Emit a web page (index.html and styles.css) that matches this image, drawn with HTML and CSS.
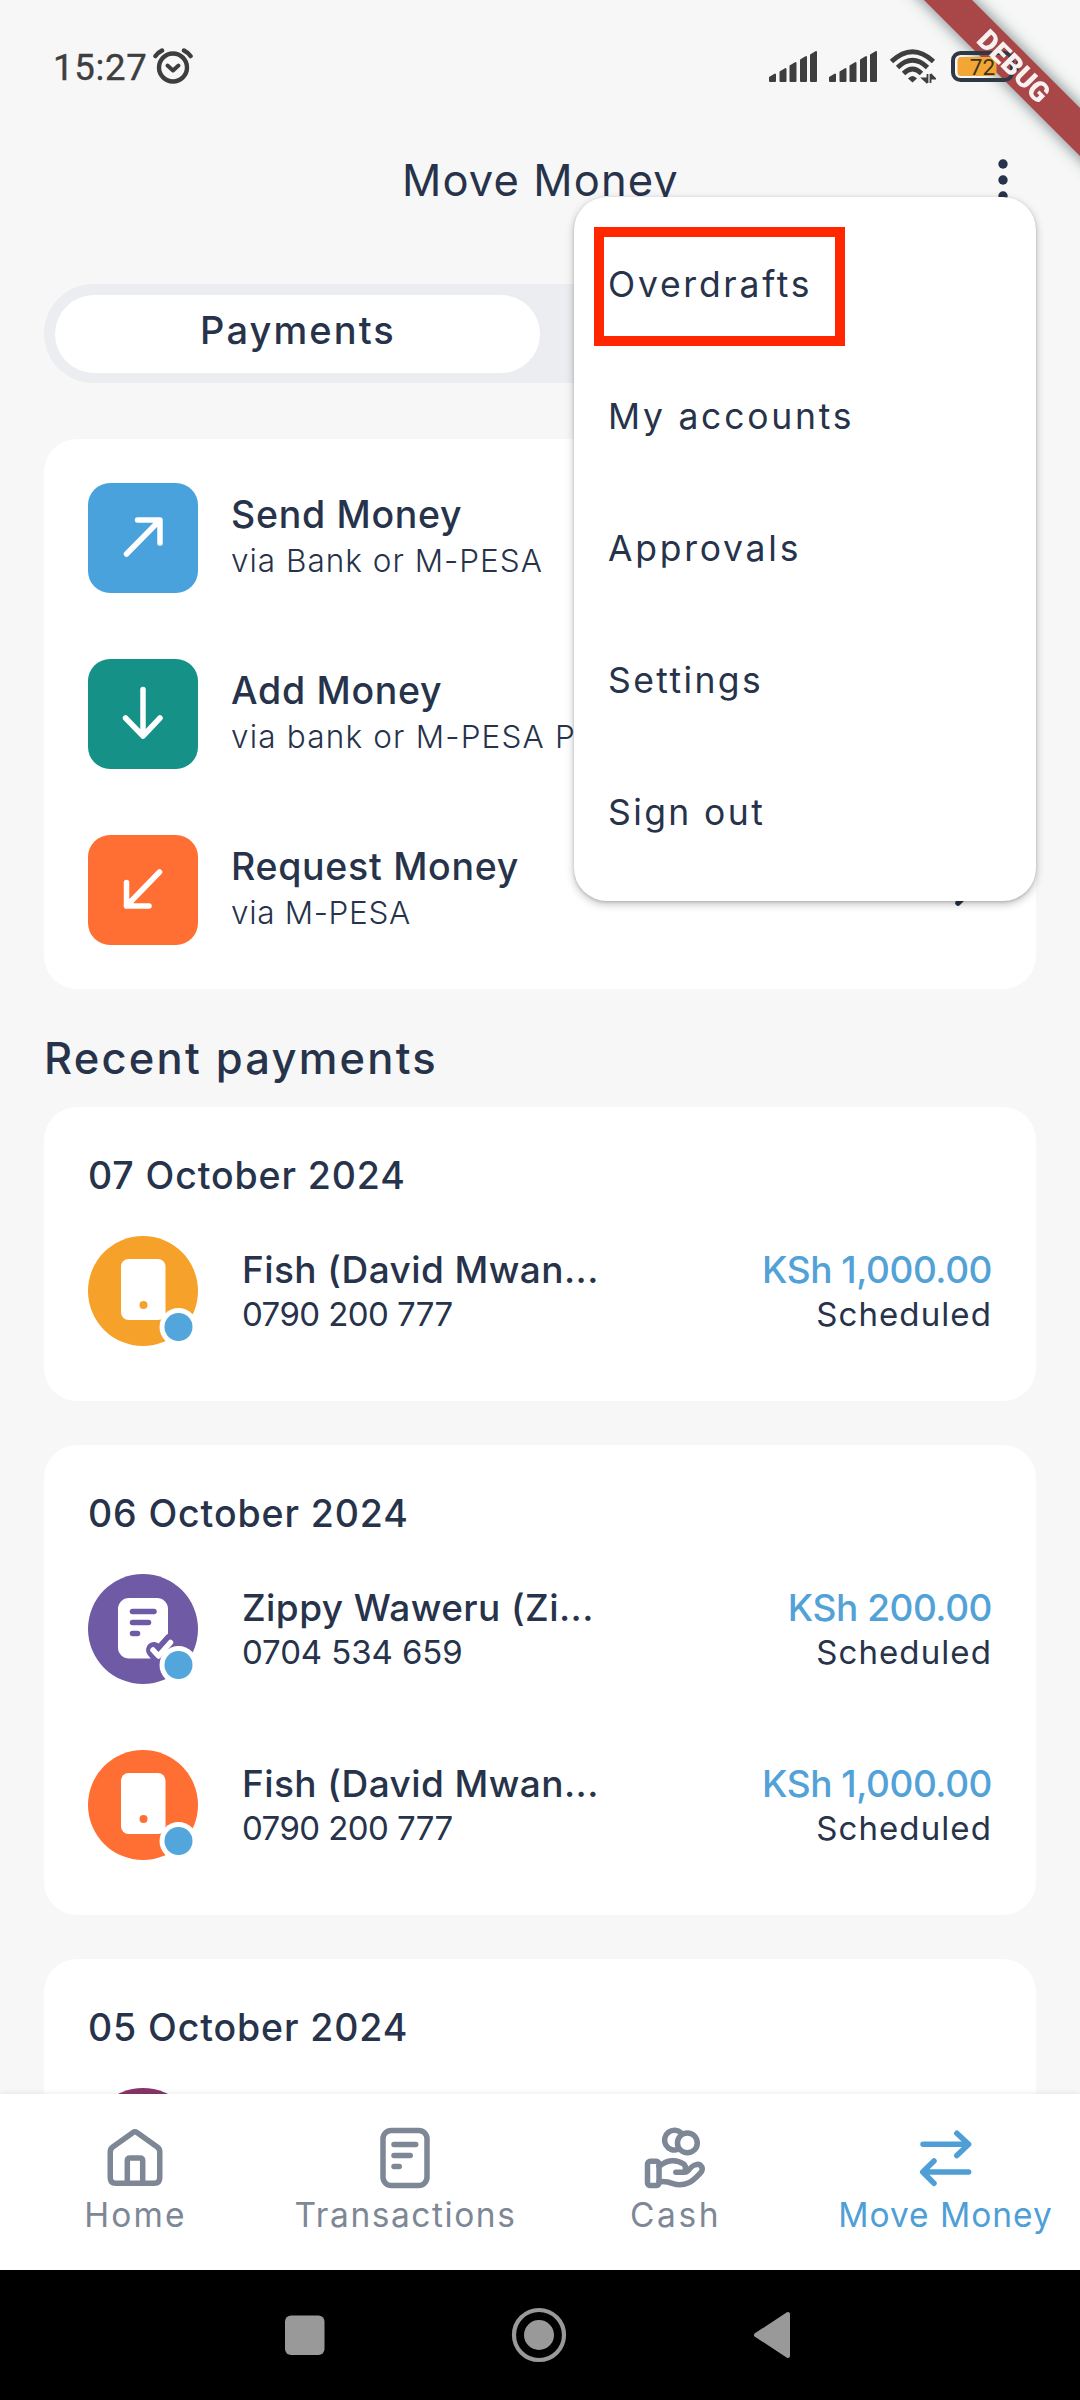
FILE: index.html
```html
<!DOCTYPE html>
<html lang="en">
<head>
<meta charset="utf-8">
<title>Move Money</title>
<link rel="stylesheet" href="styles.css">
</head>
<body>
<svg class="ribbon" viewBox="0 0 200 200" aria-hidden="true">
  <rect class="ribbon-band" x="-200" y="-17" width="400" height="34" transform="translate(134 66) rotate(45)"/>
</svg>
<svg class="ribbon ribbon-label" viewBox="0 0 200 200">
  <text class="ribbon-text" x="0" y="10" text-anchor="middle" transform="translate(134 66) rotate(45)">DEBUG</text>
</svg>

<div class="status">
  <span class="clock">15:27</span>
  <svg class="alarm" viewBox="0 0 40 38" fill="none" stroke="#3e3e3e" stroke-linecap="round">
    <circle cx="20" cy="20.5" r="14" stroke-width="4.4"/>
    <path d="M14.500 18.500l5.500 5 5.500-5" stroke-width="4" stroke-linejoin="round"/>
    <path d="M2.500 9Q5 5.500 9 3.500M37.500 9Q35 5.500 31 3.500" stroke-width="4.500"/>
  </svg>
  <div class="status-right">
    <svg class="signal" viewBox="0 0 48 31" fill="#3e3e3e" stroke="#3e3e3e" stroke-width="2" stroke-linejoin="round">
      <path d="M1 26.500l5-3V30H1zM11.500 21l5-3V30h-5zM21.500 15l5-3V30h-5zM32 9l5-3V30h-5zM42 4l5-3V30h-5z"/>
    </svg>
    <svg class="signal" viewBox="0 0 48 31" fill="#3e3e3e" stroke="#3e3e3e" stroke-width="2" stroke-linejoin="round">
      <path d="M1 26.500l5-3V30H1zM11.500 21l5-3V30h-5zM21.500 15l5-3V30h-5zM32 9l5-3V30h-5zM42 4l5-3V30h-5z"/>
    </svg>
    <svg class="wifi" viewBox="0 0 46 35" fill="none" stroke="#3e3e3e" stroke-width="4.800">
      <path d="M1.500 12.500Q22.500-7 43.500 12.500M7.500 18.500Q22.500 4 37.500 18.500M13.500 24.500Q22.500 15.500 31.500 24.500"/>
      <path d="M18 29.500Q22.500 24.500 27 29.500L22.500 33.500z" fill="#3e3e3e" stroke="none"/>
      <path d="M37.500 25V34M37.500 34L32.500 29.500H37.500M40.500 34V25M40.500 25L45 29.500H40.500" fill="#3e3e3e" stroke-width="1.800"/>
    </svg>
    <svg class="battery" viewBox="0 0 69 31">
      <rect x="2" y="2" width="59" height="27" rx="7.500" fill="none" stroke="#2f3845" stroke-width="4"/>
      <rect x="6.500" y="6" width="39" height="19" rx="3.500" fill="#f2a735"/>
      <path d="M65 10.500q3 0 3 5t-3 5z" fill="#2f3845"/>
      <text x="31.500" y="24" text-anchor="middle" class="battery-text">72</text>
    </svg>
  </div>
</div>

<header class="appbar">
  <h1 class="title">Move Money</h1>
  <svg class="more" viewBox="0 0 12 44" fill="#27334a"><circle cx="6" cy="6" r="4.700"/><circle cx="6" cy="22" r="4.700"/><circle cx="6" cy="38" r="4.700"/></svg>
</header>

<div class="menu">
  <div class="menu-item"><span class="highlight"></span>Overdrafts</div>
  <div class="menu-item">My accounts</div>
  <div class="menu-item">Approvals</div>
  <div class="menu-item tighter">Settings</div>
  <div class="menu-item tighter">Sign out</div>
</div>

<main class="content">
  <div class="segmented"><div class="segment">Payments</div></div>

  <section class="card actions">
    <div class="action">
      <svg class="tile send" viewBox="0 0 110 110"><path d="M38.500 71L71.500 37.500M49.500 37H72V60"/></svg>
      <div class="action-text"><div class="action-name">Send Money</div><div class="action-sub">via Bank or M-PESA</div></div>
    </div>
    <div class="action">
      <svg class="tile add" viewBox="0 0 110 110"><path d="M55 30.500V77M37.500 59L55 77 72 59"/></svg>
      <div class="action-text"><div class="action-name">Add Money</div><div class="action-sub wide">via bank or M-PESA P</div></div>
    </div>
    <div class="action">
      <svg class="tile request" viewBox="0 0 110 110"><path d="M71.500 37L38.500 71M38.500 47.500V71H61"/></svg>
      <div class="action-text"><div class="action-name">Request Money</div><div class="action-sub narrow">via M-PESA</div></div>
      <svg class="chevron" viewBox="0 0 22 34" fill="none" stroke="#27334a" stroke-width="5.500" stroke-linecap="round" stroke-linejoin="round"><path d="M4 4l13 13L4 30"/></svg>
    </div>
  </section>

  <h2 class="heading">Recent payments</h2>

  <section class="card day">
    <div class="date">07 October 2024</div>
    <div class="payments">
      <div class="payment">
        <svg class="avatar amber" viewBox="0 0 110 110"><circle class="disc" cx="55" cy="55" r="55"/><rect x="33" y="23" width="44.500" height="61" rx="7.500" fill="#fff"/><circle class="disc" cx="55.500" cy="69" r="4"/><circle cx="90.500" cy="91" r="19" fill="#fff"/><circle cx="90.500" cy="91" r="14" fill="#52a6dc"/></svg>
        <div class="who"><div class="name">Fish (David Mwan...</div><div class="phone tight">0790 200 777</div></div>
        <div class="sum"><div class="amount">KSh 1,000.00</div><div class="state">Scheduled</div></div>
      </div>
    </div>
  </section>

  <section class="card day">
    <div class="date">06 October 2024</div>
    <div class="payments">
      <div class="payment">
        <svg class="avatar purple" viewBox="0 0 110 110"><circle class="disc" cx="55" cy="55" r="55"/><rect x="30" y="24" width="50" height="60.500" rx="11" fill="#fff"/><g fill="none" stroke-linecap="round" stroke-linejoin="round"><path class="line" stroke-width="5.500" d="M44.500 37.500H66M44.500 48.500H60.500M44.500 59.500H49.500"/><path class="line" stroke-width="16" d="M66 76L70.500 81.500 84 66.500"/><path stroke="#fff" stroke-width="5.500" d="M65 76L70.500 82 82.500 68.500"/></g><circle cx="90.500" cy="91" r="19" fill="#fff"/><circle cx="90.500" cy="91" r="14" fill="#52a6dc"/></svg>
        <div class="who"><div class="name">Zippy Waweru (Zi...</div><div class="phone">0704 534 659</div></div>
        <div class="sum"><div class="amount">KSh 200.00</div><div class="state">Scheduled</div></div>
      </div>
      <div class="payment">
        <svg class="avatar orange" viewBox="0 0 110 110"><circle class="disc" cx="55" cy="55" r="55"/><rect x="33" y="23" width="44.500" height="61" rx="7.500" fill="#fff"/><circle class="disc" cx="55.500" cy="69" r="4"/><circle cx="90.500" cy="91" r="19" fill="#fff"/><circle cx="90.500" cy="91" r="14" fill="#52a6dc"/></svg>
        <div class="who"><div class="name">Fish (David Mwan...</div><div class="phone tight">0790 200 777</div></div>
        <div class="sum"><div class="amount">KSh 1,000.00</div><div class="state">Scheduled</div></div>
      </div>
    </div>
  </section>

  <section class="card day">
    <div class="date">05 October 2024</div>
    <div class="payments">
      <div class="payment"><svg class="avatar plum" viewBox="0 0 110 110"><circle class="disc" cx="55" cy="55" r="55"/></svg></div>
    </div>
  </section>
</main>

<nav class="tabs">
  <div class="tab">
    <svg class="tab-icon" viewBox="0 0 24 24"><path d="M3 19.200V9.700Q3 8.700 3.900 8L11.300 2.700Q12 2.200 12.700 2.700L20.100 8Q21 8.700 21 9.700V19.200Q21 21.200 19 21.200H5Q3 21.200 3 19.200z"/><path d="M9.200 21V13Q9.200 12 10.200 12H13.800Q14.800 12 14.800 13V21"/></svg>
    <span class="tab-label home">Home</span>
  </div>
  <div class="tab">
    <svg class="tab-icon" viewBox="0 0 24 24"><rect x="4" y="2" width="16" height="20" rx="3"/><path d="M8 7.100H15.900M8 11.100H13.900M8 15.100H9.900"/></svg>
    <span class="tab-label">Transactions</span>
  </div>
  <div class="tab">
    <svg class="tab-icon" viewBox="0 0 24 24"><path d="M14.300 2.900A3.600 3.600 0 1 0 13 8.900"/><circle cx="16.500" cy="6.500" r="3.600"/><rect x="2" y="13.200" width="4.200" height="8.800" rx="1"/><path d="M6.200 15Q8.500 13.200 10.800 13T15.300 14.300Q16.200 15.400 15.600 16.800M12.300 17.200H15.400Q16.300 17.200 17 16.300Q18.500 14.600 19.500 14.500Q20.800 13.900 21.700 15.100Q22.300 16.400 21.200 17.500Q18.600 20.300 17 21Q14 22.300 11.300 21.300Q9 20.400 6.200 20.600"/></svg>
    <span class="tab-label cash">Cash</span>
  </div>
  <div class="tab active">
    <svg class="tab-icon" viewBox="0 0 24 24"><path d="M4 7H20.400M16.300 3L20.600 7 16.300 11.100M20.600 17.100H4M8 13.100L3.900 17.100 8 21.200"/></svg>
    <span class="tab-label move">Move Money</span>
  </div>
</nav>

<div class="system">
  <svg class="sys-icon" viewBox="0 0 56 56"><rect x="8" y="8.500" width="39.500" height="39.500" rx="6"/></svg>
  <svg class="sys-icon" viewBox="0 0 56 56"><circle cx="28" cy="28" r="25" fill="none" stroke="#999" stroke-width="4.200"/><circle cx="28" cy="28" r="15"/></svg>
  <svg class="sys-icon" viewBox="0 0 56 56"><path d="M11 28L43 7V49z" stroke="#999" stroke-width="4" stroke-linejoin="round"/></svg>
</div>
</body>
</html>
```
FILE: styles.css
```css
* { box-sizing: border-box; }

body {
  position: relative;
  display: flex;
  flex-direction: column;
  width: 1080px;
  height: 2400px;
  margin: 0;
  overflow: hidden;
  background: #f7f7f7;
  color: #27334a;
  font-family: Inter, "Open Sans", sans-serif;
}

svg { display: block; flex: none; }

/* status bar */
.status {
  display: flex;
  align-items: flex-start;
  height: 120px;
  padding: 48px 64px 0 53px;
}
.clock {
  margin-top: -2px;
  width: 100px;
  color: #3e3e3e;
  font: 400 36.500px/44px Roboto, sans-serif;
  letter-spacing: 0.700px;
  -webkit-text-stroke: 0.400px #3e3e3e;
}
.alarm { width: 40px; height: 38px; margin-top: -1px; }
.status-right {
  display: flex;
  position: relative;
  z-index: 3;
  margin-left: auto;
  margin-right: -4px;
}
.signal { width: 48px; height: 31px; margin: 3px 12px 0 0; }
.wifi { width: 46px; height: 35px; margin: 1px 15px 0 1px; }
.battery { width: 69px; height: 31px; margin-top: 3px; }
.battery-text { font: 400 22.500px Roboto, sans-serif; fill: #3b3322; }

.ribbon {
  position: absolute;
  top: 0;
  right: 0;
  z-index: 2;
  width: 200px;
  height: 200px;
}
.ribbon-label { z-index: 5; opacity: 0.930; }
.ribbon-band { fill: #a84648; filter: drop-shadow(0 0 8px rgba(0, 20, 20, 0.550)); }
.ribbon-text { fill: #fff; font: 900 28px Roboto, sans-serif; }

/* app bar */
.appbar {
  display: flex;
  position: relative;
  align-items: center;
  justify-content: center;
  height: 119px;
}
.title {
  margin: 0 0 0 1px;
  font-size: 43.500px;
  font-weight: 400;
  letter-spacing: 1.100px;
  line-height: 60px;
}
.more { position: absolute; top: 38px; right: 71px; width: 12px; height: 44px; }

/* popup menu */
.menu {
  position: absolute;
  top: 197px;
  left: 574px;
  z-index: 4;
  width: 462px;
  height: 704px;
  padding: 22px 33px;
  border-radius: 33px;
  background: #fff;
  box-shadow: 0 3px 8px rgba(0, 0, 0, 0.250), 0 1px 3px rgba(0, 0, 0, 0.150);
}
.menu-item {
  position: relative;
  height: 132px;
  padding-left: 1px;
  font-size: 35.500px;
  letter-spacing: 2.750px;
  line-height: 131px;
}
.menu-item.tighter { letter-spacing: 2.400px; }
.highlight {
  position: absolute;
  top: 8px;
  left: -13px;
  width: 251px;
  height: 119px;
  border: 10px solid #ff2600;
}

/* page content */
.content { flex: 1; min-height: 0; overflow: hidden; padding: 45px 44px 0; }
.segmented {
  height: 99px;
  padding: 11px;
  border-radius: 50px;
  background: #ecedf0;
}
.segment {
  width: 485px;
  height: 78px;
  padding-left: 1px;
  border-radius: 39px;
  background: #fff;
  font-size: 38px;
  font-weight: 500;
  letter-spacing: 2.100px;
  line-height: 71px;
  text-align: center;
}
.card { border-radius: 33px; background: #fff; }
.actions {
  display: flex;
  flex-direction: column;
  gap: 66px;
  height: 550px;
  margin-top: 56px;
  padding: 44px;
}
.action { display: flex; position: relative; gap: 33px; height: 110px; }
.tile {
  width: 110px;
  height: 110px;
  border-radius: 22px;
  fill: none;
  stroke: #fff;
  stroke-width: 5.500px;
  stroke-linecap: round;
  stroke-linejoin: round;
}
.send { background: #4aa2dd; }
.add { background: #159187; }
.request { background: #ff6f33; }
.action-text { padding-top: 9px; white-space: nowrap; }
.action-name {
  font-size: 37.500px;
  font-weight: 500;
  letter-spacing: 0.700px;
  line-height: 46px;
}
.action-sub { font-size: 31.500px; font-weight: 300; letter-spacing: 1px; line-height: 45px; }
.action-sub.wide { letter-spacing: 1.180px; }
.action-sub.narrow { letter-spacing: 0.660px; }
.chevron { width: 22px; height: 34px; margin: 38px 16px 0 auto; }

.heading {
  height: 118px;
  margin: 0;
  padding-top: 21px;
  font-size: 43.500px;
  font-weight: 500;
  letter-spacing: 2.200px;
  line-height: 97px;
}

.day { margin-bottom: 44px; padding: 44px 44px 55px; }
.date {
  height: 51px;
  font-size: 37.500px;
  font-weight: 500;
  letter-spacing: 0.880px;
  line-height: 50px;
}
.payments { display: flex; flex-direction: column; gap: 66px; margin-top: 34px; }
.payment { display: flex; height: 110px; }
.avatar { width: 110px; height: 110px; }
.amber .disc { fill: #f5a12a; }
.purple .disc { fill: #6f5aa6; }
.purple .line { stroke: #6f5aa6; }
.orange .disc { fill: #ff6f33; }
.plum .disc { fill: #87346b; }
.who { padding: 13px 0 0 44px; white-space: nowrap; }
.name { font-size: 37px; font-weight: 500; letter-spacing: 0.420px; line-height: 42px; height: 43px; }
.phone { font-size: 33px; letter-spacing: -0.100px; line-height: 44px; }
.phone.tight { letter-spacing: -0.570px; }
.sum { margin-left: auto; padding-top: 13px; text-align: right; }
.amount {
  height: 43px;
  color: #52a2d8;
  font-size: 37px;
  font-weight: 500;
  letter-spacing: -0.450px;
  line-height: 42px;
}
.state { font-size: 33px; letter-spacing: 1.100px; line-height: 44px; }

/* bottom tabs */
.tabs {
  display: grid;
  position: relative;
  grid-template-columns: repeat(4, 1fr);
  flex: none;
  height: 176px;
  padding-top: 30.500px;
  background: #fff;
  box-shadow: 0 -1px 5px rgba(0, 0, 0, 0.080);
}
.tab { display: flex; flex-direction: column; align-items: center; color: #7e8796; }
.tab.active { color: #4f9fd6; }
.tab-icon {
  width: 66px;
  height: 66px;
  fill: none;
  stroke: currentColor;
  stroke-width: 2;
  stroke-linecap: round;
  stroke-linejoin: round;
}
.tab-label { padding-left: 1px; font-size: 33.500px; letter-spacing: 1.550px; line-height: 49px; }
.tab-label.home { letter-spacing: 2.200px; }
.tab-label.cash { letter-spacing: 2.600px; }
.tab-label.move { letter-spacing: 0.980px; }

/* system navigation */
.system {
  display: flex;
  flex: none;
  align-items: center;
  justify-content: center;
  gap: 178px;
  height: 130px;
  padding-right: 2px;
  background: #000;
}
.sys-icon { width: 56px; height: 56px; fill: #999; }
```
